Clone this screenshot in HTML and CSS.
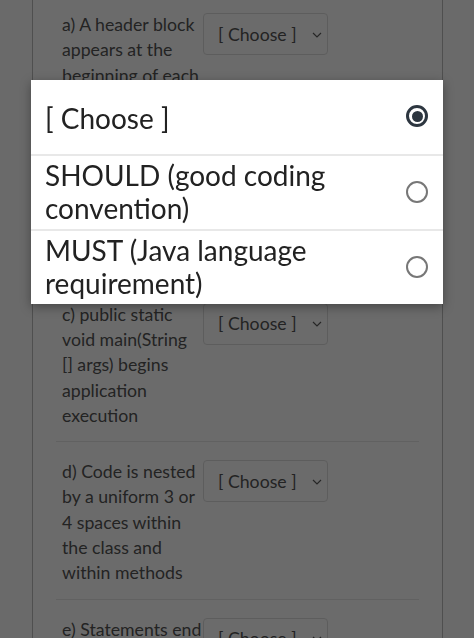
FILE: index.html
```html
<!DOCTYPE html>
<html lang="en">

<head>
  <meta charset="UTF-8" />
  <meta name="viewport" content="width=device-width, initial-scale=1.0" />
  <title>Quiz - Coding Conventions</title>
  <link rel="stylesheet" href="styles.css">
</head>

<body>
  <div class="quiz-card">
    <!-- Matching questions -->
    <div class="question">
      <p class="question-text">a) A header block appears at the beginning of each file</p>
      <div class="select-box">
        <span>[ Choose ]</span>
        <svg class="chevron" width="10" height="6" viewBox="0 0 10 6"><path d="M1 1 L5 5 L9 1" fill="none" stroke="#5c5c5c" stroke-width="1.2" /></svg>
      </div>
    </div>
    <div class="question">
      <p class="question-text">b) Class names begin with an uppercase letter and use camel case</p>
      <div class="select-box">
        <span>[ Choose ]</span>
        <svg class="chevron" width="10" height="6" viewBox="0 0 10 6"><path d="M1 1 L5 5 L9 1" fill="none" stroke="#5c5c5c" stroke-width="1.2" /></svg>
      </div>
    </div>
    <div class="question">
      <p class="question-text">c) public static void main(String<br>[] args) begins application execution</p>
      <div class="select-box">
        <span>[ Choose ]</span>
        <svg class="chevron" width="10" height="6" viewBox="0 0 10 6"><path d="M1 1 L5 5 L9 1" fill="none" stroke="#5c5c5c" stroke-width="1.2" /></svg>
      </div>
    </div>
    <div class="question">
      <p class="question-text">d) Code is nested by a uniform 3 or 4 spaces within the class and within methods</p>
      <div class="select-box">
        <span>[ Choose ]</span>
        <svg class="chevron" width="10" height="6" viewBox="0 0 10 6"><path d="M1 1 L5 5 L9 1" fill="none" stroke="#5c5c5c" stroke-width="1.2" /></svg>
      </div>
    </div>
    <div class="question">
      <p class="question-text">e) Statements end with a semicolon</p>
      <div class="select-box">
        <span>[ Choose ]</span>
        <svg class="chevron" width="10" height="6" viewBox="0 0 10 6"><path d="M1 1 L5 5 L9 1" fill="none" stroke="#5c5c5c" stroke-width="1.2" /></svg>
      </div>
    </div>
  </div>

  <!-- Native picker opened over the page -->
  <div class="backdrop"></div>
  <div class="picker">
    <div class="picker-option first">
      <span class="picker-label">[ Choose ]</span>
      <span class="radio checked"></span>
    </div>
    <div class="picker-option">
      <span class="picker-label">SHOULD (good coding convention)</span>
      <span class="radio"></span>
    </div>
    <div class="picker-option">
      <span class="picker-label">MUST (Java language requirement)</span>
      <span class="radio"></span>
    </div>
  </div>
</body>

</html>
```

FILE: styles.css
```css
* {
  margin: 0;
  padding: 0;
  box-sizing: border-box;
  font-family: 'Lato', sans-serif;
}

body {
  background: #fcfcfc;
  color: #555;
  padding: 0 31px 0 32px;
  overflow: hidden;
}

.quiz-card {
  background: #fff;
  border-left: 1px solid #bdbdbd;
  border-right: 1px solid #bdbdbd;
  padding: 0 23px;
  margin-top: -5px;
}

.question {
  display: flex;
  align-items: flex-start;
  padding: 17px 6px 13px;
  border-bottom: 1px solid #e6e6e6;
}

.question-text {
  width: 141px;
  flex-shrink: 0;
  font-size: 17.7px;
  line-height: 25.3px;
}

.select-box {
  width: 125px;
  height: 42px;
  flex-shrink: 0;
  border: 1px solid #dedede;
  border-radius: 4px;
  display: flex;
  align-items: center;
  justify-content: space-between;
  padding: 0 5px 0 14px;
  font-size: 17.7px;
  margin-top: 1px;
}

.chevron {
  margin-top: 1px;
}

.backdrop {
  position: fixed;
  top: 0;
  left: 0;
  right: 0;
  bottom: 0;
  background: rgba(0, 0, 0, 0.58);
}

.picker {
  position: fixed;
  top: 80px;
  left: 31px;
  width: 412px;
  background: #fff;
  box-shadow: 0 3px 10px rgba(0, 0, 0, 0.35);
}

.picker-option {
  display: flex;
  align-items: center;
  justify-content: space-between;
  gap: 20px;
  min-height: 73px;
  padding: 3px 15px 5px 14px;
  font-size: 28px;
  line-height: 32.5px;
  color: #222;
}

.picker-option.first {
  min-height: 74px;
}

.picker-option.first .picker-label {
  padding-top: 4px;
}

.picker-option + .picker-option {
  border-top: 2px solid #e8e8e8;
}

.radio {
  width: 22px;
  height: 22px;
  flex-shrink: 0;
  border: 2px solid #777;
  border-radius: 50%;
}

.radio.checked {
  border: 3px solid #2d3640;
  position: relative;
}

.radio.checked::after {
  content: '';
  position: absolute;
  top: 2.5px;
  left: 2.5px;
  width: 11px;
  height: 11px;
  border-radius: 50%;
  background: #2d3640;
}
```
